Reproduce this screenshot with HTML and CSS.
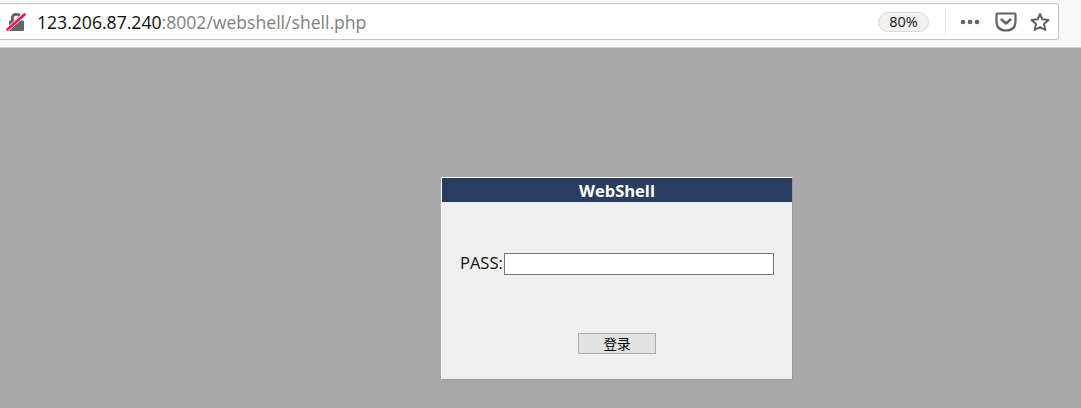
FILE: index.html
```html
<!DOCTYPE html>
<html lang="zh">
<head>
  <meta charset="UTF-8" />
  <title>WebShell</title>
  <link rel="stylesheet" href="styles.css">
</head>
<body>

  <div class="toolbar">
    <div class="urlbar">
      <svg class="lock" width="20" height="20" viewBox="0 0 20 20">
        <path d="M3 18V9.500Q3 8.500 4 8.500H5V6Q5 1 10.500 1Q14 1 15 3L8 8.500H17Q18 8.500 18 9.500V18Q18 19 17 19H4Q3 19 3 18Z" fill="#636363"/>
        <path d="M7.800 8.500V6Q7.800 3.800 10.500 3.800Q11.800 3.800 12.400 4.600L7.800 8.500Z" fill="#fff"/>
        <path d="M1 18L19 2" stroke="#fff" stroke-width="3.800"/>
        <path d="M1.500 17.500L18.500 2.500" stroke="#ff0f50" stroke-width="2.600" stroke-linecap="round"/>
      </svg>
      <div class="url"><span class="host">123.206.87.240</span>:8002/webshell/shell.php</div>
      <div class="zoom-level">80%</div>
      <div class="separator"></div>
      <svg class="tool-icon more" width="20" height="6" viewBox="0 0 20 6">
        <circle cx="3" cy="3" r="2.300" fill="#636363"/>
        <circle cx="10" cy="3" r="2.300" fill="#636363"/>
        <circle cx="17" cy="3" r="2.300" fill="#636363"/>
      </svg>
      <svg class="tool-icon pocket" width="22" height="20" viewBox="0 0 22 20">
        <path d="M2.500 1.500H19.500Q20.500 1.500 20.500 2.500V9Q20.500 18.500 11 18.500Q1.500 18.500 1.500 9V2.500Q1.500 1.500 2.500 1.500Z" fill="none" stroke="#636363" stroke-width="2.200"/>
        <path d="M6.500 7.500L11 11.500L15.500 7.500" fill="none" stroke="#636363" stroke-width="2.400" stroke-linecap="round" stroke-linejoin="round"/>
      </svg>
      <svg class="tool-icon star" width="20" height="20" viewBox="0 0 20 20">
        <path d="M10 2L12.400 7.300L18.500 8L14 12L15.300 18L10 15L4.700 18L6 12L1.500 8L7.600 7.300Z" fill="none" stroke="#636363" stroke-width="2" stroke-linejoin="round"/>
      </svg>
    </div>
  </div>

  <div class="page">
    <form class="login">
      <div class="login-title">WebShell</div>
      <div class="login-row">
        <label class="pass-label" for="pass">PASS:</label><input id="pass" class="pass-input" type="password">
      </div>
      <div class="login-actions">
        <button type="button" class="login-btn">登录</button>
      </div>
    </form>
  </div>

</body>
</html>
```

FILE: styles.css
```css
html, body {
  margin: 0;
  height: 100%;
  overflow: hidden;
}

body {
  display: flex;
  flex-direction: column;
  background: #a9a9a9;
  font-family: "Open Sans", "Noto Sans CJK SC", sans-serif;
}

.toolbar {
  height: 48px;
  box-sizing: border-box;
  padding: 3px 22px 0 0;
  background: #f8f8f8;
  border-bottom: 1px solid #cdcdcd;
}

.urlbar {
  display: flex;
  align-items: center;
  height: 37px;
  box-sizing: border-box;
  padding-left: 6px;
  background: #fff;
  border: 1px solid #c4c4c4;
  border-left: none;
  border-radius: 0 3px 3px 0;
}

.lock {
  flex: none;
}

.url {
  margin-left: 11px;
  flex: 1;
  font-size: 17.6px;
  color: #7f7f7f;
  white-space: nowrap;
}

.host {
  color: #0c0c0d;
}

.zoom-level {
  width: 51px;
  height: 20px;
  box-sizing: border-box;
  margin-right: 16px;
  background: #f1f1f1;
  border: 1px solid #d8d8d8;
  border-radius: 10px;
  color: #111;
  font-size: 14.500px;
  line-height: 18px;
  text-align: center;
}

.separator {
  width: 1px;
  height: 26px;
  margin-right: 14px;
  background: #e6e6e6;
}

.tool-icon {
  flex: none;
}

.more {
  margin-right: 15px;
}

.pocket {
  margin-right: 13px;
}

.star {
  margin-right: 8px;
}

.page {
  flex: 1;
  padding: 129px 0 0 441px;
}

.login {
  width: 352px;
  height: 203px;
  box-sizing: border-box;
  background: #efefef;
  border: 1px solid;
  border-color: #fff #999 #999 #fff;
}

.login-title {
  height: 24px;
  background: #283d5f;
  color: #fff;
  font-size: 16.500px;
  font-weight: bold;
  line-height: 25px;
  text-align: center;
}

.login-row {
  display: flex;
  align-items: center;
  height: 22px;
  margin-top: 51px;
  padding-left: 18px;
  font-size: 16.500px;
  color: #111;
}

.pass-label {
  margin-bottom: 3px;
}

.pass-input {
  width: 270px;
  height: 22px;
  box-sizing: border-box;
  margin: 0 0 0 1px;
  padding: 0 2px;
  background: #fff;
  border: 1px solid #767676;
}

.login-actions {
  margin-top: 57px;
  text-align: center;
}

.login-btn {
  width: 78px;
  height: 21px;
  box-sizing: border-box;
  margin: 0;
  padding: 0;
  background: #e1e1e1;
  border: 1px solid #adadad;
  color: #000;
  font-family: "Noto Sans CJK SC", sans-serif;
  font-size: 13.500px;
  line-height: 17px;
}
```
